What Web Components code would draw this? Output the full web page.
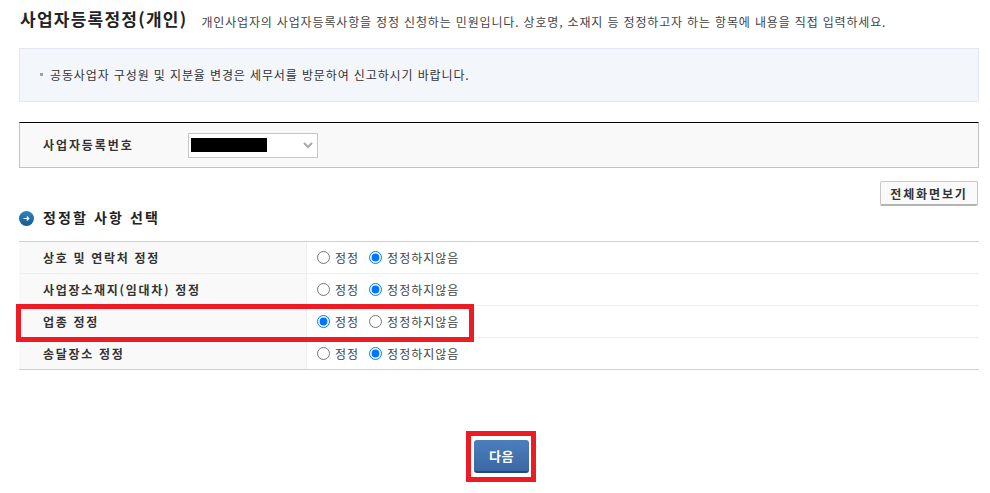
<!DOCTYPE html>
<html lang="ko">
<head>
<meta charset="utf-8">
<title>사업자등록정정(개인)</title>
<style>
  html, body { margin: 0; background: #fff; }
  body { font: 12px "Noto Sans CJK KR", "Liberation Sans", sans-serif; color: #333; }
  #wrap { width: 960px; padding: 0 11px 0 19px; }
</style>
</head>
<body>
<div id="wrap">
  <page-title heading="사업자등록정정(개인)">개인사업자의 사업자등록사항을 정정 신청하는 민원입니다. 상호명, 소재지 등 정정하고자 하는 항목에 내용을 직접 입력하세요.</page-title>
  <info-note>공동사업자 구성원 및 지분율 변경은 세무서를 방문하여 신고하시기 바랍니다.</info-note>
  <biz-number label="사업자등록번호"></biz-number>
  <tool-bar>전체화면보기</tool-bar>
  <section-head>정정할 사항 선택</section-head>
  <choice-table>
    <choice-row name="a" label="상호 및 연락처 정정"></choice-row>
    <choice-row name="b" label="사업장소재지(임대차) 정정"></choice-row>
    <choice-row name="c" label="업종 정정" picked mark></choice-row>
    <choice-row name="d" label="송달장소 정정"></choice-row>
  </choice-table>
  <next-button>다음</next-button>
</div>
<script>
class PageTitle extends HTMLElement {
  connectedCallback() {
    this.attachShadow({ mode: 'open' }).innerHTML = `
      <style>
        :host { display: flex; align-items: center; height: 48px; padding: 0 0 10px 1px; box-sizing: border-box; white-space: nowrap; }
        h1 { margin: 0 14px 0 0; font-size: 17px; font-weight: 700; color: #222; letter-spacing: 1.25px; line-height: 38px; }
        p { margin: 0; font-size: 12px; color: #444; letter-spacing: .84px; padding-top: 4px; }
      </style>
      <h1>${this.getAttribute('heading')}</h1>
      <p><slot></slot></p>
    `;
  }
}
customElements.define('page-title', PageTitle);

class InfoNote extends HTMLElement {
  connectedCallback() {
    this.attachShadow({ mode: 'open' }).innerHTML = `
      <style>
        :host { display: flex; align-items: center; gap: 7px; height: 54px; box-sizing: border-box; padding: 0 20px 2px; background: #f3f6fb; border: 1px solid #e1e8f2; color: #333; letter-spacing: .88px; }
        i { width: 3px; height: 3px; background: #a0a0a0; }
      </style>
      <i></i><span><slot></slot></span>
    `;
  }
}
customElements.define('info-note', InfoNote);

class BizNumber extends HTMLElement {
  connectedCallback() {
    this.attachShadow({ mode: 'open' }).innerHTML = `
      <style>
        :host { display: flex; align-items: center; margin-top: 20px; height: 46px; box-sizing: border-box; padding-left: 23px; background: #f9f9f9; border: 1px solid #c3c3c3; border-top-color: #000; }
        b { width: 145px; font-size: 12px; color: #333; letter-spacing: 1.9px; padding-bottom: 2px; }
        .sel { display: flex; align-items: center; justify-content: space-between; width: 130px; height: 25px; box-sizing: border-box; padding: 0 4px 0 2px; background: #fff; border: 1px solid #c6c6c6; }
        .sel i { width: 76px; height: 14px; background: #000; }
      </style>
      <b>${this.getAttribute('label')}</b>
      <div class="sel"><i></i>
        <svg width="10" height="7" viewBox="0 0 10 7"><path d="M1 1l4 4 4-4" fill="none" stroke="#a8a8a8" stroke-width="2"/></svg>
      </div>
    `;
  }
}
customElements.define('biz-number', BizNumber);

class ToolBar extends HTMLElement {
  connectedCallback() {
    this.attachShadow({ mode: 'open' }).innerHTML = `
      <style>
        :host { display: flex; justify-content: flex-end; margin-top: 13px; padding-right: 1px; height: 25px; }
        button { width: 98px; height: 25px; padding: 0; font: 700 12px "Noto Sans CJK KR", sans-serif; letter-spacing: 1.85px; color: #333; background: #fafafa; border: 1px solid #c8c8c8; border-bottom: 2px solid #b4b4b4; border-radius: 2px; }
      </style>
      <button><slot></slot></button>
    `;
  }
}
customElements.define('tool-bar', ToolBar);

class SectionHead extends HTMLElement {
  connectedCallback() {
    this.attachShadow({ mode: 'open' }).innerHTML = `
      <style>
        :host { display: flex; align-items: center; gap: 9px; height: 25px; font-size: 14px; font-weight: 700; color: #222; letter-spacing: 2.1px; }
        span { padding-bottom: 3px; }
      </style>
      <svg width="15" height="15" viewBox="0 0 15 15">
        <defs><linearGradient id="g" x1="0" y1="0" x2="0" y2="1"><stop offset="0" stop-color="#2b86c4"/><stop offset="1" stop-color="#145a92"/></linearGradient></defs>
        <circle cx="7.5" cy="7.5" r="7.5" fill="url(#g)"/>
        <path d="M4.5 7.5h5M7.8 5.5l2 2-2 2" fill="none" stroke="#fff" stroke-width="1.2"/>
      </svg>
      <span><slot></slot></span>
    `;
  }
}
customElements.define('section-head', SectionHead);

class ChoiceTable extends HTMLElement {
  connectedCallback() {
    this.attachShadow({ mode: 'open' }).innerHTML = `
      <style>
        :host { display: block; margin-top: 10px; border-top: 1px solid #cfcfcf; border-bottom: 1px solid #cfcfcf; }
      </style>
      <slot></slot>
    `;
  }
}
customElements.define('choice-table', ChoiceTable);

class ChoiceRow extends HTMLElement {
  connectedCallback() {
    const name = this.getAttribute('name');
    const picked = this.hasAttribute('picked');
    this.attachShadow({ mode: 'open' }).innerHTML = `
      <style>
        :host { display: flex; position: relative; height: 32px; box-sizing: border-box; border-top: 1px solid #eee; }
        :host(:first-child) { height: 31px; border-top: 0; }
        :host([mark]) { z-index: 2; }
        b { display: flex; align-items: center; width: 263px; padding-left: 24px; margin-right: 1px; background: #f9f9f9; border-right: 1px solid #eee; font-size: 12px; color: #333; letter-spacing: 1.7px; }
        .opts { display: flex; align-items: center; padding-left: 8px; color: #444; }
        label { display: flex; align-items: center; margin-right: 9px; letter-spacing: 1px; }
        input { width: 13px; height: 13px; margin: 0 5px 0 1px; accent-color: #0075ff; }
        .mark { position: absolute; left: -3px; top: -2px; width: 448px; height: 28px; border: 5px solid #ed1c24; pointer-events: none; }
      </style>
      <b>${this.getAttribute('label')}</b>
      <div class="opts">
        <label><input type="radio" name="${name}" ${picked ? 'checked' : ''}>정정</label>
        <label><input type="radio" name="${name}" ${picked ? '' : 'checked'}>정정하지않음</label>
      </div>
      ${this.hasAttribute('mark') ? '<div class="mark"></div>' : ''}
    `;
  }
}
customElements.define('choice-row', ChoiceRow);

class NextButton extends HTMLElement {
  connectedCallback() {
    this.attachShadow({ mode: 'open' }).innerHTML = `
      <style>
        :host { display: flex; justify-content: center; margin-top: 61px; padding-left: 4px; }
        .mark { padding: 4px 2px 4px 3px; border: 5px solid #ed1c24; }
        button { display: block; width: 55px; height: 33px; padding: 0; font: 700 13px "Noto Sans CJK KR", sans-serif; color: #fff; letter-spacing: .5px; background: linear-gradient(#4b7fbc, #3a68a4); border: 0; border-bottom: 2px solid #234a7c; border-radius: 3px; }
      </style>
      <div class="mark"><button><slot></slot></button></div>
    `;
  }
}
customElements.define('next-button', NextButton);
</script>
</body>
</html>
